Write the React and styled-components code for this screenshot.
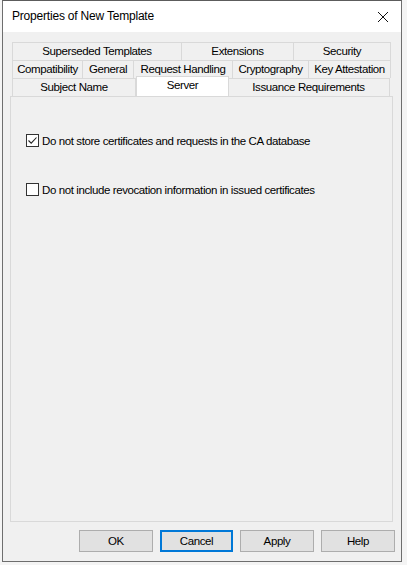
import styled, { createGlobalStyle } from "styled-components";

const GlobalStyle = createGlobalStyle`
  html, body {
    margin: 0;
    padding: 0;
    background: #f4f4f4;
  }
  body {
    font-family: "Liberation Sans", Arial, sans-serif;
    font-size: 11.5px;
    color: #000;
  }
`;

const Window = styled.div`
  margin-left: 2px;
  width: 400px;
  height: 562px;
  box-sizing: border-box;
  border: 1px solid #6e6e6e;
  border-top-color: #5c5c5c;
  display: flex;
  flex-direction: column;
  background: #f0f0f0;
`;

const TitleBar = styled.div`
  height: 31px;
  flex-shrink: 0;
  background: #fff;
  display: flex;
  align-items: center;
  padding: 0 10px 0 9px;
  font-size: 12px;
  letter-spacing: -0.2px;
`;

const Title = styled.span`
  flex: 1;
  padding-bottom: 2px;
`;

const CloseButton = styled.div`
  width: 12px;
  height: 12px;
  margin-right: 2px;
  display: flex;
`;

const Body = styled.div`
  flex: 1;
  display: flex;
  flex-direction: column;
  padding: 10px 8px 0 7px;
`;

const Tabs = styled.div`
  padding: 0 2px;
  display: flex;
  flex-direction: column;
`;

const TabRow = styled.div`
  display: flex;
  height: 18px;
`;

const Tab = styled.div`
  box-sizing: border-box;
  width: ${(p) => p.$w}px;
  flex-shrink: 0;
  display: flex;
  align-items: center;
  justify-content: center;
  border: 1px solid #d9d9d9;
  border-left-width: ${(p) => (p.$first ? 1 : 0)}px;
  border-bottom-width: 0;
  background: #f0f0f0;
  white-space: nowrap;
  letter-spacing: -0.4px;
  padding-bottom: 1px;
`;

const ActiveTab = styled(Tab)`
  background: #fff;
  height: 20px;
  margin-top: -2px;
  border-left-width: 1px;
  border-right-width: 1px;
  margin-right: -1px;
  position: relative;
  z-index: 1;
  padding-bottom: 3px;
`;

const Panel = styled.div`
  flex: 1;
  box-sizing: border-box;
  border: 1px solid #d9d9d9;
  background: #f0f0f0;
  padding: 37px 0 0 15px;
  display: flex;
  flex-direction: column;
  gap: 36px;
`;

const CheckRow = styled.label`
  display: flex;
  align-items: center;
  gap: 3px;
  height: 13px;
  letter-spacing: -0.4px;
`;

const Box = styled.span`
  width: 13px;
  height: 13px;
  box-sizing: border-box;
  border: 1px solid #333;
  background: #fff;
  display: flex;
  align-items: center;
  justify-content: center;
  flex-shrink: 0;
`;

const ButtonBar = styled.div`
  display: flex;
  justify-content: flex-end;
  gap: 7px;
  padding: 8px 0 9px;
  margin-right: -2px;
`;

const Button = styled.button`
  width: ${(p) => (p.$w ? p.$w : 74)}px;
  height: 22px;
  box-sizing: border-box;
  font-family: "Liberation Sans", Arial, sans-serif;
  font-size: 11.5px;
  color: #000;
  background: #e1e1e1;
  border: ${(p) => (p.$default ? "2px solid #0078d7" : "1px solid #adadad")};
  padding: 0;
  letter-spacing: -0.4px;
`;

function Check({ checked, children }) {
  return (
    <CheckRow>
      <Box>
        {checked && (
          <svg width="11" height="11" viewBox="0 0 11 11">
            <path d="M1.5 5.5 L4.2 8.2 L9.5 2.5" fill="none" stroke="#222" strokeWidth="1.1" />
          </svg>
        )}
      </Box>
      {children}
    </CheckRow>
  );
}

export default function App() {
  return (
    <>
      <GlobalStyle />
      <Window>
        <TitleBar>
          <Title>Properties of New Template</Title>
          <CloseButton>
            <svg width="12" height="12" viewBox="0 0 12 12">
              <path d="M1 1 L11 11 M11 1 L1 11" stroke="#111" strokeWidth="1" />
            </svg>
          </CloseButton>
        </TitleBar>
        <Body>
          <Tabs>
            <TabRow>
              <Tab $w={170} $first>Superseded Templates</Tab>
              <Tab $w={112}>Extensions</Tab>
              <Tab $w={97}>Security</Tab>
            </TabRow>
            <TabRow>
              <Tab $w={71} $first>Compatibility</Tab>
              <Tab $w={51}>General</Tab>
              <Tab $w={99}>Request Handling</Tab>
              <Tab $w={76}>Cryptography</Tab>
              <Tab $w={82}>Key Attestation</Tab>
            </TabRow>
            <TabRow>
              <Tab $w={124} $first>Subject Name</Tab>
              <ActiveTab $w={93}>Server</ActiveTab>
              <Tab $w={162}>Issuance Requirements</Tab>
            </TabRow>
          </Tabs>
          <Panel>
            <Check checked>Do not store certificates and requests in the CA database</Check>
            <Check>Do not include revocation information in issued certificates</Check>
          </Panel>
          <ButtonBar>
            <Button>OK</Button>
            <Button $default $w={73}>Cancel</Button>
            <Button>Apply</Button>
            <Button>Help</Button>
          </ButtonBar>
        </Body>
      </Window>
    </>
  );
}
